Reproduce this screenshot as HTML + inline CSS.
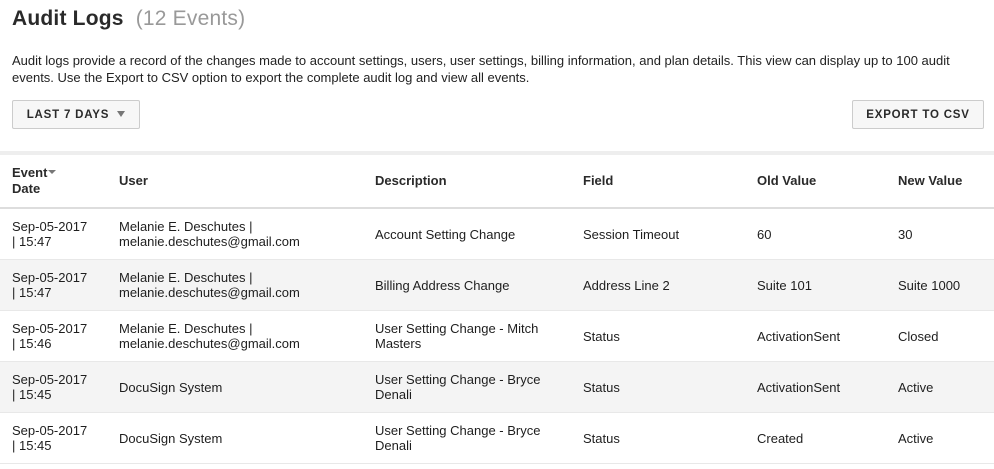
<!DOCTYPE html>
<html><head><style>
body{margin:0;width:994px;height:469px;overflow:hidden;background:#fff;font-family:"Liberation Sans",sans-serif;color:#1e1e1e}
h1{position:absolute;left:12px;top:7px;margin:0;font-size:21px;font-weight:bold;color:#2a2a2a;letter-spacing:0.2px}
h1 span{font-weight:normal;color:#999;margin-left:6px}
p{position:absolute;left:12px;top:52px;margin:0;width:970px;font-size:13px;line-height:17px;color:#222}
.btn{position:absolute;top:100px;height:27px;border:1px solid #ccc;border-radius:2px;background:#f7f7f7;font-size:11.5px;font-weight:bold;letter-spacing:0.8px;line-height:28px;color:#2a2a2a;text-align:center}
.tri{display:inline-block;width:0;height:0;border-left:4px solid transparent;border-right:4px solid transparent;border-top:6px solid #777;margin-left:8px;vertical-align:1px}
table{position:absolute;left:0;top:151px;width:994px;border-collapse:collapse;border-top:4px solid #eee;font-size:13px}
th{text-align:left;font-weight:bold;height:52px;border-bottom:2px solid #ddd;padding:0;font-size:13px;line-height:16px;color:#2a2a2a}
td{height:50px;padding:0;line-height:15px;border-bottom:1px solid #e8e8e8;vertical-align:middle}
tr.g td{background:#f4f4f4}
th:first-child,td:first-child{padding-left:12px}
</style></head><body>
<h1>Audit Logs <span>(12 Events)</span></h1>
<p>Audit logs provide a record of the changes made to account settings, users, user settings, billing information, and plan details. This view can display up to 100 audit events. Use the Export to CSV option to export the complete audit log and view all events.</p>
<div class="btn" style="left:12px;width:126px">LAST 7 DAYS<span class="tri"></span></div>
<div class="btn" style="left:852px;width:130px">EXPORT TO CSV</div>
<table>
<colgroup><col style="width:119px"><col style="width:256px"><col style="width:208px"><col style="width:174px"><col style="width:141px"><col></colgroup>
<tr><th>Event<span class="tri" style="margin-left:1px;border-width:4px 4px 0;vertical-align:3px"></span><br>Date</th><th>User</th><th>Description</th><th>Field</th><th>Old Value</th><th>New Value</th></tr>
<tr><td>Sep-05-2017<br>| 15:47</td><td>Melanie E. Deschutes |<br>melanie.deschutes@gmail.com</td><td>Account Setting Change</td><td>Session Timeout</td><td>60</td><td>30</td></tr>
<tr class="g"><td>Sep-05-2017<br>| 15:47</td><td>Melanie E. Deschutes |<br>melanie.deschutes@gmail.com</td><td>Billing Address Change</td><td>Address Line 2</td><td>Suite 101</td><td>Suite 1000</td></tr>
<tr><td>Sep-05-2017<br>| 15:46</td><td>Melanie E. Deschutes |<br>melanie.deschutes@gmail.com</td><td>User Setting Change - Mitch<br>Masters</td><td>Status</td><td>ActivationSent</td><td>Closed</td></tr>
<tr class="g"><td>Sep-05-2017<br>| 15:45</td><td>DocuSign System</td><td>User Setting Change - Bryce<br>Denali</td><td>Status</td><td>ActivationSent</td><td>Active</td></tr>
<tr><td>Sep-05-2017<br>| 15:45</td><td>DocuSign System</td><td>User Setting Change - Bryce<br>Denali</td><td>Status</td><td>Created</td><td>Active</td></tr>
</table>
</body></html>
